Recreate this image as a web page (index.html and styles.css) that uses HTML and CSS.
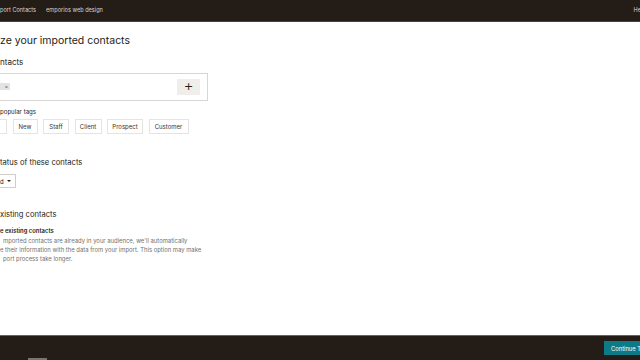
FILE: index.html
```html
<!DOCTYPE html>
<html>
<head>
<meta charset="utf-8">
<link rel="stylesheet" href="styles.css">
</head>
<body>
<div class="page">
  <header class="topbar">
    <span class="crumb">port Contacts</span>
    <span class="crumb">emporios web design</span>
    <span class="help">He</span>
  </header>
  <main class="content">
    <h1 class="title">ze your imported contacts</h1>
    <div class="label">ntacts</div>
    <div class="tagbox">
      <span class="chip">×</span>
      <button class="plus">+</button>
    </div>
    <div class="small-label">popular tags</div>
    <div class="tags">
      <span class="tag tag-cut"></span>
      <span class="tag">New</span>
      <span class="tag">Staff</span>
      <span class="tag">Client</span>
      <span class="tag">Prospect</span>
      <span class="tag">Customer</span>
    </div>
    <h2 class="section">tatus of these contacts</h2>
    <div class="select"><span>d</span><span class="caret"></span></div>
    <h2 class="section section-2">xisting contacts</h2>
    <div class="check-label">e existing contacts</div>
    <p class="desc"><span class="line l1">mported contacts are already in your audience, we'll automatically</span><span class="line">e their information with the data from your import. This option may make</span><span class="line l1">port process take longer.</span></p>
  </main>
  <footer class="footbar">
    <span class="back"></span>
    <button class="continue">Continue T</button>
  </footer>
</div>
</body>
</html>
```
FILE: styles.css
```css
* { box-sizing: border-box; }
html, body { margin: 0; padding: 0; }
body {
  width: 640px;
  height: 360px;
  overflow: hidden;
  background: #ffffff;
  font-family: Inter, "Open Sans", sans-serif;
  color: #241c15;
}
.page {
  display: flex;
  flex-direction: column;
  height: 360px;
}
.topbar {
  height: 22px;
  flex: none;
  background: #241c17;
  border-bottom: 1px solid #4a4440;
  display: flex;
  align-items: center;
  padding: 0 0 1px 0;
  font-size: 5.6px;
  color: #d9d5d0;
}
.crumb { margin-right: 10px; }
.help { margin-left: auto; margin-right: -1px; white-space: nowrap; }
.content {
  flex: 1;
  padding: 0;
}
.title {
  margin: 12px 0 0 0;
  font-size: 10.5px;
  font-weight: 400;
  line-height: 14px;
  letter-spacing: 0;
  white-space: nowrap;
}
.label {
  margin-top: 9px;
  font-size: 8px;
  line-height: 10px;
}
.tagbox {
  margin-top: 6px;
  width: 208px;
  height: 28px;
  border: 1px solid #d8d6d2;
  border-left: none;
  display: flex;
  align-items: center;
  justify-content: space-between;
  padding-right: 7px;
}
.chip {
  width: 10px;
  height: 7px;
  background: #e5e3df;
  font-size: 5px;
  line-height: 7px;
  text-align: right;
  padding-right: 2px;
  color: #555;
  margin-top: -2px;
}
.plus {
  width: 23px;
  height: 16px;
  border: none;
  background: #efeeea;
  font-family: "DejaVu Sans", sans-serif;
  font-size: 11px;
  line-height: 16px;
  padding: 0;
  color: #241c15;
}
.small-label {
  margin-top: 7px;
  font-size: 6.1px;
  line-height: 8px;
}
.tags {
  margin-top: 3px;
  display: flex;
  gap: 5.5px;
}
.tag {
  height: 15px;
  border: 1px solid #e6e4e0;
  padding: 0 8px;
  font-size: 6px;
  line-height: 13px;
  color: #3a332d;
}
.tag-cut { width: 7px; padding: 0; border-left: none; }
.tag:nth-child(2) { width: 25px; text-align: center; padding: 0; }
.tag:nth-child(3) { width: 26px; text-align: center; padding: 0; }
.tag:nth-child(4) { width: 27px; text-align: center; padding: 0; }
.tag:nth-child(5) { width: 36px; text-align: center; padding: 0; }
.tag:nth-child(6) { width: 40px; text-align: center; padding: 0; }
.section {
  margin: 24px 0 0 0;
  font-size: 7.6px;
  font-weight: 400;
  line-height: 10px;
}
.select {
  margin-top: 6px;
  width: 16px;
  height: 14px;
  border: 1px solid #d0cec9;
  border-left: none;
  display: flex;
  align-items: center;
  gap: 3px;
  font-size: 6px;
}
.caret {
  width: 0; height: 0;
  border-left: 2px solid transparent;
  border-right: 2px solid transparent;
  border-top: 2px solid #241c15;
}
.section-2 { margin-top: 22px; }
.check-label {
  margin-top: 7px;
  font-size: 5.9px;
  font-weight: 600;
  line-height: 8px;
}
.desc {
  margin: 1px 0 0 0;
  font-size: 5.9px;
  line-height: 9px;
  color: #747069;
}
.line { display: block; white-space: nowrap; }
.l1 { padding-left: 3px; }
.footbar {
  height: 25px;
  flex: none;
  background: #241c17;
  border-top: 1px solid #6a625c;
  display: flex;
  align-items: flex-start;
  padding-top: 5px;
  position: relative;
}
.back {
  position: absolute;
  left: 28px;
  bottom: -2px;
  width: 19px;
  height: 4px;
  background: #7a746f;
}
.continue {
  margin-left: auto;
  margin-right: -10px;
  width: 46px;
  height: 14px;
  border: none;
  background: #0c7a87;
  color: #ffffff;
  font-family: Inter, sans-serif;
  font-size: 5.8px;
  text-align: left;
  padding: 0 0 0 7px;
}
```
